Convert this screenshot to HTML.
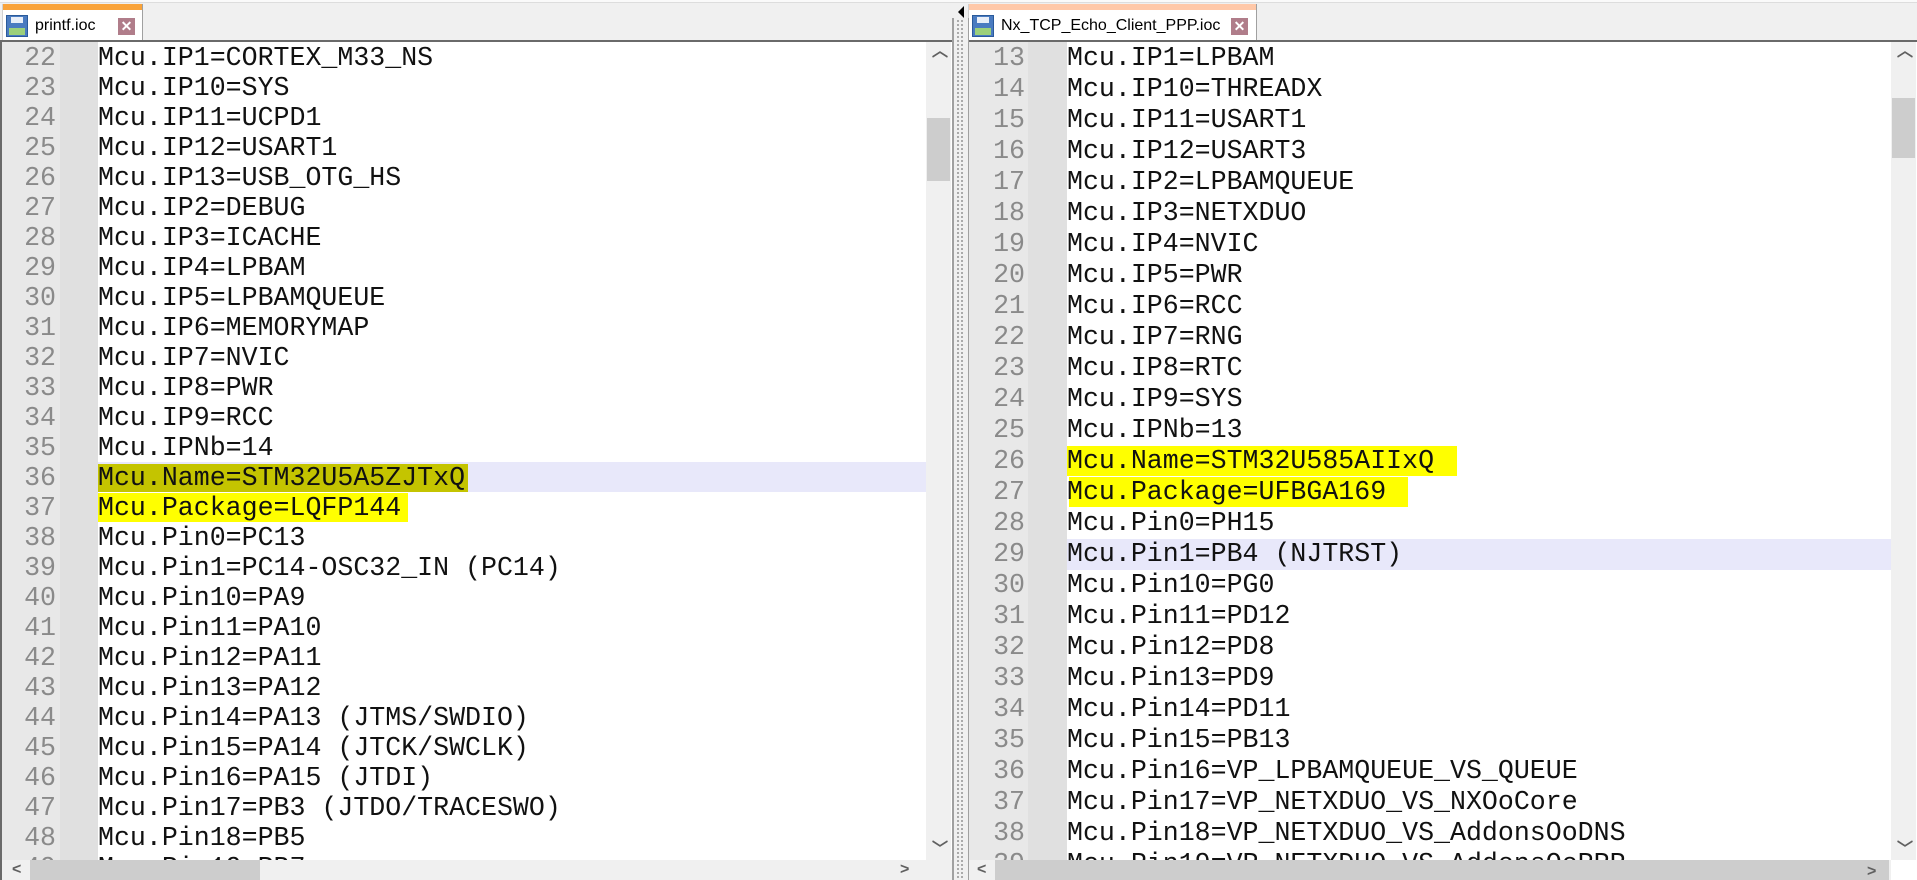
<!DOCTYPE html>
<html><head><style>
*{margin:0;padding:0;box-sizing:border-box}
body{width:1917px;height:880px;overflow:hidden;background:#f0f0f0;font-family:"Liberation Mono",monospace;position:relative}
.tab{position:absolute;top:4px;height:37px;background:#fff;border-right:1px solid #a0a0a0;border-left:1px solid #d0d0d0}
.tab .bar{position:absolute;left:0;right:0;top:0;height:6px}
.tab .lbl{position:absolute;top:10px;font-family:"Liberation Sans",sans-serif;font-size:16px;color:#000;line-height:24px;white-space:nowrap}
.ico{position:absolute;top:11px;width:22px;height:22px;background:#4a7bc0;border:1px solid #2a5a9a}
.ico:before{content:"";position:absolute;left:4px;top:1px;width:12px;height:6px;background:#e8eef8}
.ico:after{content:"";position:absolute;left:2px;bottom:1px;width:16px;height:7px;background:#9cd07a}
.x{position:absolute;top:14px;width:17px;height:17px;background:#b07d8a;color:#fff;font:bold 14px/17px "Liberation Sans",sans-serif;text-align:center}
.pane{position:absolute;top:40px;height:840px;background:#fff;border-top:2px solid #6a6a6a;overflow:hidden}
.gut{position:absolute;top:0;bottom:20px;left:0;background:#e8e8e8}
.fold{position:absolute;top:0;bottom:20px;background:#e0e0e0}
.ln{position:absolute;font-size:26.6px;line-height:30px;height:30px;white-space:pre;color:#111}
.num{color:#8a8a8a;text-align:right}
.vs{position:absolute;top:0;width:25px;bottom:20px;background:#f0f0f0}
.th{position:absolute;background:#cdcdcd}
.hs{position:absolute;bottom:0;height:20px;background:#f0f0f0}
.ar{position:absolute;color:#606060;font:bold 16px/20px "Liberation Sans",sans-serif}
.hl{position:absolute;background:#e8e8fa}
.yel{position:absolute;background:#ffff00}
</style></head><body>
<div style="position:absolute;left:0;top:0;width:1917px;height:3px;background:#fafafa;border-bottom:1px solid #ddd"></div>
<div class="tab" style="left:2px;width:141px"><div class="bar" style="background:#f9a33a"></div><div class="ico" style="left:3px"></div><div class="lbl" style="left:32px">printf.ioc</div><div class="x" style="left:115px">✕</div></div>
<div class="tab" style="left:968px;width:289px"><div class="bar" style="background:#ffc8a8"></div><div class="ico" style="left:3px"></div><div class="lbl" style="left:32px">Nx_TCP_Echo_Client_PPP.ioc</div><div class="x" style="left:262px">✕</div></div>
<div style="position:absolute;left:958px;top:6px;width:0;height:0;border-top:6px solid transparent;border-bottom:6px solid transparent;border-right:6px solid #000"></div>
<div style="position:absolute;left:952px;top:18px;width:17px;height:862px;border-left:2px solid #a0a0a0;border-right:1px solid #a0a0a0;background:repeating-linear-gradient(#f0f0f0 0 2px,transparent 2px 4px),linear-gradient(90deg,#f0f0f0 0 3px,#aaa 3px 5px,#f0f0f0 5px 7px,#aaa 7px 9px,#f0f0f0 9px)"></div>

<div class="pane" style="left:0;width:952px;border-left:2px solid #6a6a6a">
<div class="gut" style="width:58px"></div><div class="fold" style="left:58px;width:38px"></div>
<div class="hl" style="left:96px;top:420px;width:828px;height:30px"></div>
<div class="yel" style="left:96px;top:422px;width:370px;height:28px;background:#c4c400"></div>
<div class="yel" style="left:96px;top:451px;width:310px;height:29px"></div>
<div id="L"></div>
<div class="vs" style="left:924px"><div class="ar" style="left:6px;top:0">︿</div><div class="th" style="left:1px;top:76px;width:23px;height:63px"></div><div class="ar" style="left:6px;top:798px">﹀</div></div>
<div class="hs" style="left:0;width:952px"><div class="ar" style="left:10px;top:0">&lt;</div><div class="th" style="left:28px;top:0;width:230px;height:20px"></div><div class="ar" style="left:898px;top:0">&gt;</div></div>
</div>

<div class="pane" style="left:969px;width:948px">
<div class="gut" style="width:59px"></div><div class="fold" style="left:59px;width:39px"></div>
<div class="hl" style="left:98px;top:497px;width:824px;height:31px"></div>
<div class="yel" style="left:98px;top:404px;width:390px;height:30px"></div>
<div class="yel" style="left:100px;top:435px;width:339px;height:30px"></div>
<div id="R"></div>
<div class="vs" style="left:922px"><div class="ar" style="left:6px;top:0">︿</div><div class="th" style="left:1px;top:56px;width:23px;height:60px"></div><div class="ar" style="left:6px;top:798px">﹀</div></div>
<div class="hs" style="left:0;width:922px"><div class="ar" style="left:8px;top:0">&lt;</div><div class="th" style="left:26px;top:0;width:894px;height:20px"></div></div>
<div class="ar" style="left:898px;top:820px">&gt;</div>
</div>

<script>
function fill(id,start,lines,nx,tx,lh){var h='';for(var i=0;i<lines.length;i++){var t=i*lh+1;h+='<div class="ln num" style="left:0;width:'+nx+'px;top:'+t+'px">'+(start+i)+'</div><div class="ln" style="left:'+tx+'px;top:'+t+'px">'+lines[i]+'</div>';}document.getElementById(id).innerHTML=h;}
fill('L',22,["Mcu.IP1=CORTEX_M33_NS","Mcu.IP10=SYS","Mcu.IP11=UCPD1","Mcu.IP12=USART1","Mcu.IP13=USB_OTG_HS","Mcu.IP2=DEBUG","Mcu.IP3=ICACHE","Mcu.IP4=LPBAM","Mcu.IP5=LPBAMQUEUE","Mcu.IP6=MEMORYMAP","Mcu.IP7=NVIC","Mcu.IP8=PWR","Mcu.IP9=RCC","Mcu.IPNb=14","Mcu.Name=STM32U5A5ZJTxQ","Mcu.Package=LQFP144","Mcu.Pin0=PC13","Mcu.Pin1=PC14-OSC32_IN (PC14)","Mcu.Pin10=PA9","Mcu.Pin11=PA10","Mcu.Pin12=PA11","Mcu.Pin13=PA12","Mcu.Pin14=PA13 (JTMS/SWDIO)","Mcu.Pin15=PA14 (JTCK/SWCLK)","Mcu.Pin16=PA15 (JTDI)","Mcu.Pin17=PB3 (JTDO/TRACESWO)","Mcu.Pin18=PB5","Mcu.Pin19=PB7"],54,96,30);
fill('R',13,["Mcu.IP1=LPBAM","Mcu.IP10=THREADX","Mcu.IP11=USART1","Mcu.IP12=USART3","Mcu.IP2=LPBAMQUEUE","Mcu.IP3=NETXDUO","Mcu.IP4=NVIC","Mcu.IP5=PWR","Mcu.IP6=RCC","Mcu.IP7=RNG","Mcu.IP8=RTC","Mcu.IP9=SYS","Mcu.IPNb=13","Mcu.Name=STM32U585AIIxQ","Mcu.Package=UFBGA169","Mcu.Pin0=PH15","Mcu.Pin1=PB4 (NJTRST)","Mcu.Pin10=PG0","Mcu.Pin11=PD12","Mcu.Pin12=PD8","Mcu.Pin13=PD9","Mcu.Pin14=PD11","Mcu.Pin15=PB13","Mcu.Pin16=VP_LPBAMQUEUE_VS_QUEUE","Mcu.Pin17=VP_NETXDUO_VS_NXOoCore","Mcu.Pin18=VP_NETXDUO_VS_AddonsOoDNS","Mcu.Pin19=VP_NETXDUO_VS_AddonsOoPPP","Mcu.Pin2=PB5"],56,98,31);
</script>
</body></html>
